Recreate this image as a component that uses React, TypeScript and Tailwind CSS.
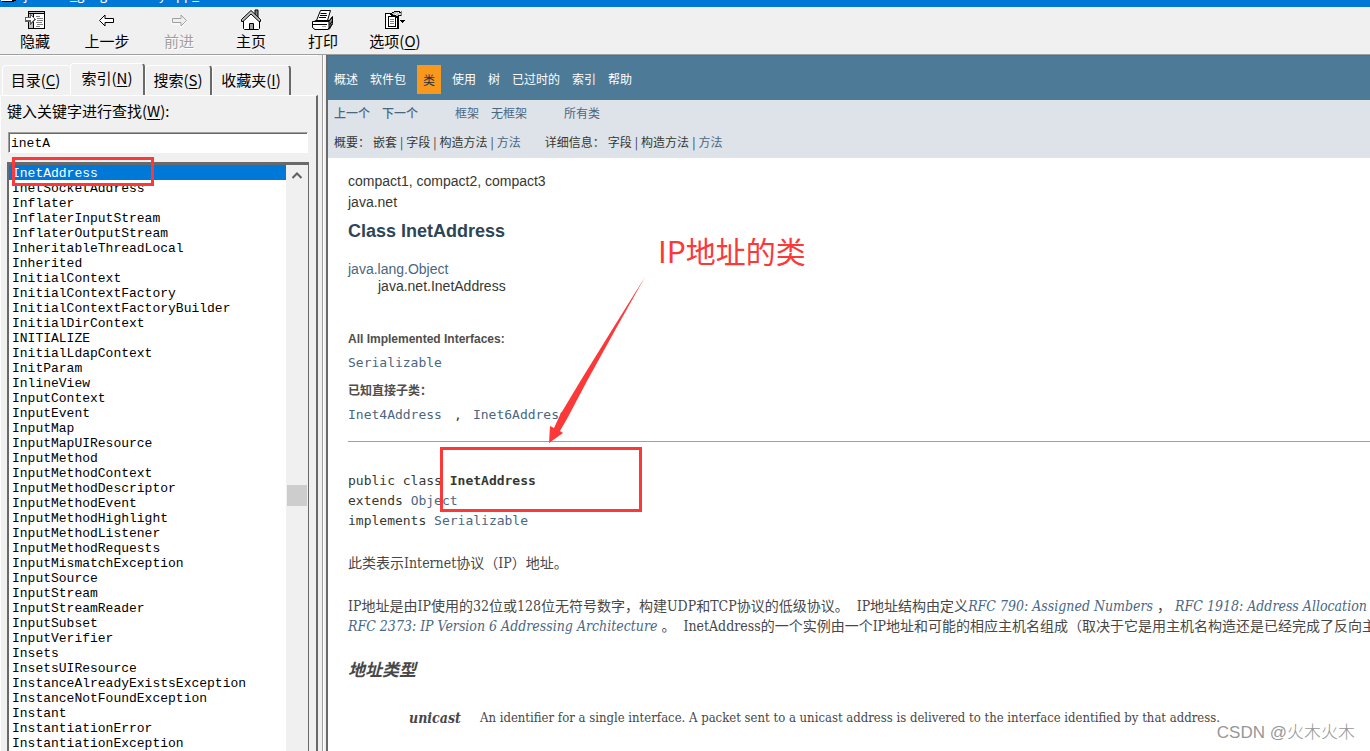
import { useState, ReactNode } from 'react';

const KEYWORDS = [
  'InetAddress', 'InetSocketAddress', 'Inflater', 'InflaterInputStream', 'InflaterOutputStream',
  'InheritableThreadLocal', 'Inherited', 'InitialContext', 'InitialContextFactory',
  'InitialContextFactoryBuilder', 'InitialDirContext', 'INITIALIZE', 'InitialLdapContext',
  'InitParam', 'InlineView', 'InputContext', 'InputEvent', 'InputMap', 'InputMapUIResource',
  'InputMethod', 'InputMethodContext', 'InputMethodDescriptor', 'InputMethodEvent',
  'InputMethodHighlight', 'InputMethodListener', 'InputMethodRequests', 'InputMismatchException',
  'InputSource', 'InputStream', 'InputStreamReader', 'InputSubset', 'InputVerifier', 'Insets',
  'InsetsUIResource', 'InstanceAlreadyExistsException', 'InstanceNotFoundException', 'Instant',
  'InstantiationError', 'InstantiationException',
];

const HideIcon = () => (
  <svg width="22" height="22" viewBox="0 0 22 22" shapeRendering="crispEdges" aria-hidden="true">
    <path d="M4 2h17v18H4z" fill="#000" />
    <path d="M5 5h4v14H5z" fill="#c0c0c0" />
    <path d="M5 3h15v1H5z" fill="#c0c0c0" />
    <path d="M10 5h10v14H10z" fill="#fff" />
    <path d="M12 7h4v1h-4zM13 9h6v1h-6zM13 11h6v1h-6zM12 13h6v1h-6zM13 15h6v1h-6zM12 17h4v1h-4z" fill="#808080" />
    <path d="M1 8h5V5h1v1h1v1h1v1h1v1h1v1h1v1h-1v1h-1v1h-1v1h-1v1H7v1H6v-3H1z" fill="#606060" />
    <path d="M2 9h5V7h1v1h1v1h1v2H9v1H8v1H7v-2H2z" fill="#fff" />
  </svg>
);

const ArrowIcon = ({ forward }: { forward?: boolean }) => (
  <svg width="22" height="22" viewBox="0 0 22 22" aria-hidden="true">
    <g transform={forward ? 'matrix(-1 0 0 1 22 0)' : undefined}>
      {forward && <path d="M3.5 12.500l6-5.500v3h8.500v5h-8.500v4z" fill="none" stroke="#fff" />}
      <path
        d="M3.500 11.500l5.500-5.500v3.500h8.500v4H9v3.500z"
        fill={forward ? '#efefef' : '#fff'}
        stroke={forward ? '#a0a0a0' : '#000'}
      />
    </g>
  </svg>
);

const HomeIcon = () => (
  <svg width="22" height="22" viewBox="0 0 22 22" aria-hidden="true">
    <path d="M15 1h3v9h-3z" fill="#808080" stroke="#000" />
    <path d="M3.5 11v8.5l1 1h14l1-1V11L11 3z" fill="#fff" stroke="#000" />
    <path d="M1.5 12.5v-2L11 1.5l9.5 9v2h-1.5L11 5l-8 7.5z" fill="#c0c0c0" stroke="#000" />
    <path d="M9.5 20.5v-6h4v6z" fill="#a0a0a0" stroke="#000" />
  </svg>
);

const PrintIcon = () => (
  <svg width="24" height="22" viewBox="0 0 24 22" aria-hidden="true">
    <path d="M4.5 11.5h14l3-4v7l-3 5.5h-15l-2-2v-4z" fill="#808080" stroke="#000" />
    <path d="M1.5 12.5h16.500v6l-1 2h-13l-2.500-2z" fill="#fff" stroke="#000" />
    <path d="M18 12l3.500-4M18.500 16l3-4M18 19l3.500-4" stroke="#000" fill="none" />
    <path d="M5.500 11.500l4-10h10l-3 10z" fill="#fff" stroke="#000" />
    <path d="M9.500 4.500h6M9 6.500h7M8 8.500h7M2 15.500h14" stroke="#000" fill="none" />
    <path d="M11 17.500h4" stroke="#a0a0a0" fill="none" />
  </svg>
);

const OptionsIcon = () => (
  <svg width="24" height="22" viewBox="0 0 24 22" shapeRendering="crispEdges" aria-hidden="true">
    <path d="M2 4h14v16H2z" fill="#000" />
    <path d="M3 5h11v14H3z" fill="#fff" />
    <path d="M5 7h8v11H5z" fill="#000" />
    <path d="M6 8h6v9H6z" fill="#fff" />
    <path d="M7 10h4v1H7zM7 12h4v1H7zM7 14h4v1H7z" fill="#808080" />
    <path d="M7 4h2V3h2V2h6v1h2v4h-3v1h-2v1h-2V8h-2V7H8z" fill="#000" />
    <path d="M9 4h2V3h5v1h2v2h-3v1h-2V6h-3z" fill="#c0c0c0" />
    <path d="M15 3h1v1h-1zM13 4h1v1h-1zM16 5h1v1h-1zM12 5h1v1h-1z" fill="#fff" />
    <path d="M18 2h1v5h-1z" fill="#808080" />
    <path d="M17 11h5v1h-1v1h-1v1h-1v-1h-1v-1h-1z" fill="#000" />
  </svg>
);

const TOOLS = [
  { label: '隐藏', icon: <HideIcon /> },
  { label: '上一步', icon: <ArrowIcon /> },
  { label: '前进', icon: <ArrowIcon forward />, disabled: true },
  { label: '主页', icon: <HomeIcon /> },
  { label: '打印', icon: <PrintIcon /> },
  { label: '选项', icon: <OptionsIcon />, hotkey: 'O' },
];

const TABS = [
  { label: '目录', hotkey: 'C', width: 'w-[68px]' },
  { label: '索引', hotkey: 'N', width: 'w-[75px]' },
  { label: '搜索', hotkey: 'S', width: 'w-[67px]' },
  { label: '收藏夹', hotkey: 'I', width: 'w-[79px]' },
];

const Hotkey = ({ k }: { k: string }) => (
  <>
    (<span className="underline underline-offset-2">{k}</span>)
  </>
);

const Link = ({ children, className = '' }: { children: ReactNode; className?: string }) => (
  <a href="#" className={`text-[#4a6782] ${className}`}>{children}</a>
);

const RfcLink = ({ children }: { children: ReactNode }) => <Link className="italic">{children}</Link>;

function Toolbar() {
  return (
    <div className="-ml-px flex h-12 shrink-0 border-b border-[#a0a0a0] bg-[#f0f0f0] pt-0.5">
      {TOOLS.map(tool => (
        <button
          key={tool.label}
          disabled={tool.disabled}
          className={`flex w-[72px] flex-col items-center text-[15px] ${
            tool.disabled ? 'text-[#a0a0a0] [text-shadow:1px_1px_0_#fff]' : 'text-black'
          }`}
        >
          {tool.icon}
          <span className="leading-5 whitespace-nowrap">
            {tool.label}
            {tool.hotkey && <Hotkey k={tool.hotkey} />}
          </span>
        </button>
      ))}
    </div>
  );
}

function IndexPanel() {
  const [tab, setTab] = useState('索引');
  const [query, setQuery] = useState('inetA');
  const [selected, setSelected] = useState('InetAddress');

  return (
    <aside className="flex w-[318px] shrink-0 flex-col border-t border-white bg-[#f0f0f0] pt-[7px]">
      <div role="tablist" className="flex h-8 shrink-0 items-end pl-0.5 text-[15px]">
        {TABS.map(t => (
          <button
            key={t.label}
            role="tab"
            aria-selected={tab === t.label}
            onClick={() => setTab(t.label)}
            className={`${t.width} rounded-t-sm border-t border-l border-white whitespace-nowrap ${
              tab === t.label ? 'h-8 pb-0.5' : 'h-[30px]'
            } ${t.label === '目录' ? 'pr-0.5' : 'border-r-2 border-r-[#696969]'}`}
          >
            {t.label}
            <Hotkey k={t.hotkey} />
          </button>
        ))}
      </div>
      <div className="flex min-h-0 flex-1 flex-col border-t border-r-2 border-l border-t-white border-r-[#696969] border-l-white pr-[7px] pl-1.5">
        <label htmlFor="keyword" className="mt-[5px] h-[21px] text-[15px] leading-5">
          键入关键字进行查找(<span className="underline underline-offset-2">W</span>):
        </label>
        <input
          id="keyword"
          value={query}
          onChange={e => setQuery(e.target.value)}
          className="mt-2.5 mr-px ml-px h-[21px] rounded-none border border-t-[#a0a0a0] border-r-white border-b-white border-l-[#a0a0a0] bg-white px-0.5 pt-0.5 font-['Liberation_Mono','Noto_Sans_CJK_SC',monospace] text-[13px] text-black shadow-[inset_1px_1px_0_#696969] outline-none"
        />
        <div className="relative mt-[9px] flex min-h-0 flex-1">
          <div className="flex flex-1 overflow-hidden border-t-3 border-r border-l-2 border-[#696969] bg-[#f0f0f0]">
            <ul className="flex-1 bg-white font-['Liberation_Mono',monospace] text-[13px]">
              {KEYWORDS.map(k => (
                <li key={k}>
                  <button
                    onClick={() => setSelected(k)}
                    className={`block h-[15px] w-full pl-[3px] text-left leading-[17px] ${
                      selected === k ? 'bg-[#0078d7] text-white' : 'text-black'
                    }`}
                  >
                    {k}
                  </button>
                </li>
              ))}
            </ul>
            <div className="mx-px flex w-5 flex-col items-center">
              <svg width="12" height="20" viewBox="0 0 12 20" fill="none" stroke="#606060" strokeWidth="2" aria-hidden="true">
                <path d="M1.500 13L6 8.500l4.500 4.500" />
              </svg>
              <div className="mt-[300px] h-[21px] w-full bg-[#cdcdcd]" />
            </div>
          </div>
          <div className="absolute -top-[5px] left-[5px] h-[29px] w-[142px] border-3 border-[#fd3838]" />
        </div>
      </div>
    </aside>
  );
}

function DocNav() {
  return (
    <nav className="shrink-0 text-xs whitespace-nowrap">
      <div className="flex h-11 items-center bg-[#4d7a97] pt-0.5 pl-1.5 text-white">
        <ul className="flex items-center gap-3">
          <li><a href="#">概述</a></li>
          <li><a href="#">软件包</a></li>
          <li className="-mx-px bg-[#f8981d] px-1.5 leading-[29px] text-[#253441]">类</li>
          <li><a href="#">使用</a></li>
          <li><a href="#">树</a></li>
          <li><a href="#">已过时的</a></li>
          <li><a href="#">索引</a></li>
          <li><a href="#">帮助</a></li>
        </ul>
      </div>
      <div className="h-[58px] bg-[#dee3e9] pt-[5px] pl-1.5 leading-4 text-[#353833]">
        <div className="flex">
          <div className="flex gap-3 font-medium">
            <Link>上一个</Link>
            <Link>下一个</Link>
          </div>
          <div className="ml-[37px] flex gap-3">
            <Link>框架</Link>
            <Link>无框架</Link>
          </div>
          <div className="ml-[37px]">
            <Link>所有类</Link>
          </div>
        </div>
        <div className="mt-[13px] flex">
          <div className="flex gap-[3px]">
            <span>概要：</span><span>嵌套</span><span>|</span><span>字段</span><span>|</span>
            <span>构造方法</span><span>|</span><Link>方法</Link>
          </div>
          <div className="ml-6 flex gap-[3px]">
            <span>详细信息：</span><span>字段</span><span>|</span><span>构造方法</span><span>|</span>
            <Link>方法</Link>
          </div>
        </div>
      </div>
    </nav>
  );
}

function Annotation() {
  return (
    <>
      <div className="absolute top-[70px] left-[330px] font-['Noto_Sans_CJK_SC',sans-serif] text-[30px] leading-[44px] text-[#fd3838]">
        IP地址的类
      </div>
      <svg className="absolute top-[119px] left-[220px]" width="98" height="168" viewBox="0 0 98 168" aria-hidden="true">
        <path d="M97 0L67 48 33 103 12 138 6 151 2 149 1 166 15 156 12 154 20 140 39 104 70 48z" fill="#fd3838" />
      </svg>
      <div className="absolute top-[289px] left-[112px] h-[65px] w-[202px] border-3 border-[#fd3838]" />
    </>
  );
}

function ClassDoc() {
  return (
    <main className="relative min-h-0 flex-1 overflow-hidden pt-[13px] pl-5 font-['Liberation_Sans','Noto_Sans_CJK_SC',sans-serif] text-sm whitespace-nowrap text-[#353833]">
      <div className="leading-[21px]">compact1, compact2, compact3</div>
      <div className="leading-[21px]">java.net</div>
      <h2 className="mt-1.5 text-lg leading-6 font-bold text-[#2c4557]">Class InetAddress</h2>
      <ul className="mt-[18px] leading-[17px]">
        <li><Link>java.lang.Object</Link></li>
        <li className="pl-[30px]">java.net.InetAddress</li>
      </ul>
      <dl className="mt-9 leading-4">
        <dt className="text-xs leading-4 font-bold text-[#4e4e4e]">All Implemented Interfaces:</dt>
        <dd className="mt-2 font-['DejaVu_Sans_Mono',monospace] text-[13px]">
          <Link>Serializable</Link>
        </dd>
        <dt className="mt-3 text-xs leading-4 font-bold text-[#4e4e4e]">已知直接子类：</dt>
        <dd className="mt-2 flex font-['DejaVu_Sans_Mono',monospace] text-[13px]">
          <Link>Inet4Address</Link>
          <span className="w-[31px] pl-3">,</span>
          <Link>Inet6Address</Link>
        </dd>
      </dl>
      <hr className="mt-[18px] border-[#a0a0a0]" />
      <pre className="mt-[29px] font-['DejaVu_Sans_Mono',monospace] text-[13px] leading-5">
        public class <b>InetAddress</b>{'\n'}
        extends <Link>Object</Link>{'\n'}
        implements <Link>Serializable</Link>
      </pre>
      <div className="font-['DejaVu_Serif_Condensed','Noto_Sans_CJK_SC',serif] leading-5 text-[#474747]">
        <p className="mt-[22px]">此类表示Internet协议（IP）地址。</p>
        <p className="mt-[23px]">
          IP地址是由IP使用的32位或128位无符号数字，构建UDP和TCP协议的低级协议。 &nbsp;IP地址结构由定义
          <RfcLink>RFC 790: Assigned Numbers</RfcLink> ，&nbsp;
          <RfcLink>RFC 1918: Address Allocation for Private Internets</RfcLink>
          <br />
          <RfcLink>RFC 2373: IP Version 6 Addressing Architecture</RfcLink> 。&nbsp;
          InetAddress的一个实例由一个IP地址和可能的相应主机名组成（取决于它是用主机名构造还是已经完成了反向主机名解析）。
        </p>
        <h4 className="mt-6 text-[17px] leading-5 font-bold italic">地址类型</h4>
        <div className="mt-7 flex pl-[61px]">
          <i className="w-[71px] font-bold">unicast</i>
          <span className="text-[13px]">
            An identifier for a single interface. A packet sent to a unicast address is delivered to the interface identified by that address.
          </span>
        </div>
      </div>
      <Annotation />
    </main>
  );
}

export default function App() {
  return (
    <div className="relative flex h-screen flex-col overflow-hidden bg-[#f0f0f0] font-['Noto_Sans_CJK_SC',sans-serif] text-black">
      <header className="flex h-[7px] shrink-0 items-end overflow-hidden bg-[#0078d7] text-[13px] leading-6 text-white">
        <svg className="mb-[5px] shrink-0" width="18" height="2" viewBox="0 0 18 2" aria-hidden="true">
          <path d="M1 0h12v1H1z" fill="#fff" />
          <path d="M2 1h12v1H2zM12 0h4v1h-4z" fill="#000" />
        </svg>
        <span className="ml-1.5 whitespace-pre">java 1.8_google.chm by app_</span>
      </header>
      <Toolbar />
      <div className="flex min-h-0 flex-1">
        <IndexPanel />
        <div className="w-[10px] shrink-0 border-r-2 border-[#696969] bg-[#f0f0f0] pl-1">
          <div className="h-full w-0.5 border-r border-l border-r-white border-l-[#a0a0a0]" />
        </div>
        <div className="flex min-w-0 flex-1 flex-col border-t border-[#696969] bg-white">
          <DocNav />
          <ClassDoc />
        </div>
      </div>
      <div className="absolute right-[15px] bottom-1.5 font-['Liberation_Sans','Noto_Sans_CJK_SC',sans-serif] text-[17px] leading-6 font-light text-[#979797]">
        CSDN @火木火木
      </div>
    </div>
  );
}
